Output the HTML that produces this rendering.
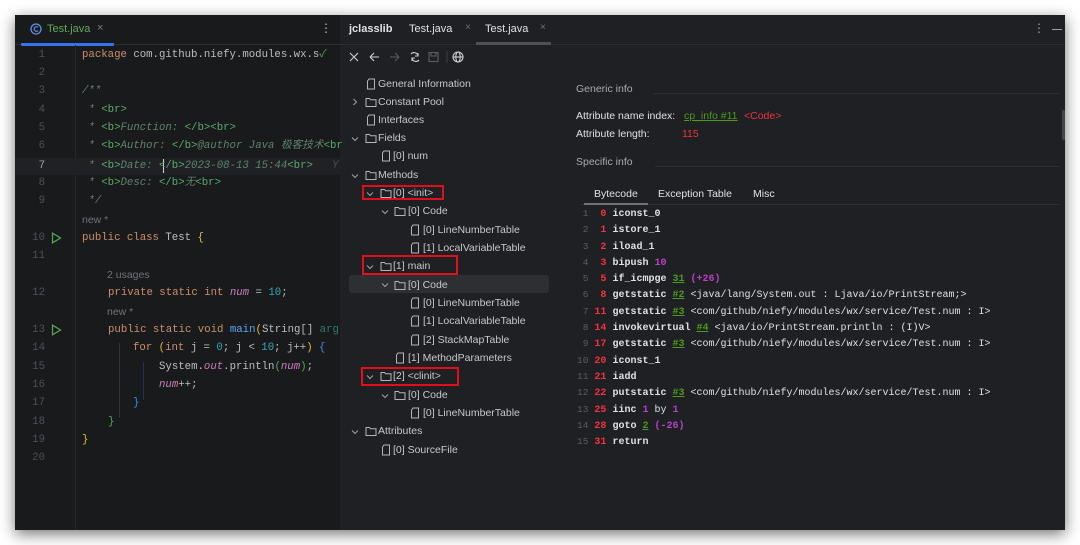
<!DOCTYPE html>
<html><head><meta charset="utf-8">
<style>
*{margin:0;padding:0;box-sizing:border-box}
body{width:1080px;height:545px;background:#fff;position:relative;overflow:hidden;font-family:"Liberation Sans","Noto Sans CJK SC",sans-serif}
.win{position:absolute;left:15px;top:15px;width:1050px;height:515px;background:#1f2023;box-shadow:0 4px 14px rgba(0,0,0,.55);overflow:hidden}
.ed{position:absolute;left:0;top:0;width:325px;height:515px;background:#191a1c}
.gline{position:absolute;left:60px;top:30px;width:1px;height:485px;background:#26272a}
.a{position:absolute;white-space:pre;line-height:14px}
.mono{font-family:"Liberation Mono","Noto Sans CJK SC",monospace;font-size:10.7px}
.ln{color:#4b5059;width:30px;text-align:right;font-family:"Liberation Mono",monospace;font-size:10.7px}
.kw{color:#cf8e6d}.cm{color:#5f826b;font-style:italic}.tg{color:#5aab6a;font-style:normal}
.pl{color:#bcbec4}.num{color:#2aacb8}.fld{color:#c77dbb;font-style:italic}.fn{color:#56a8f5}.yl{color:#e8ba36}.gr{color:#54a857}.bl{color:#3d8beb}
.hint{color:#6f737a;font-size:10.5px}
.tree{color:#c6c8cd;font-size:10.5px}
.bc{font-family:"Liberation Mono",monospace;font-size:10px;font-weight:bold;color:#dfe1e5}
.bn{color:#f2323f}.bp{color:#b740c8}.bg{color:#4c9c1a;text-decoration:underline}.br{font-weight:normal;color:#dfe1e5}
.rl{color:#5a5d63;font-family:"Liberation Mono",monospace;font-size:9.5px;font-weight:normal}
.box{position:absolute;border:2px solid #e0101a}
</style></head><body>
<div class="win">
<div class="ed">
 <div style="position:absolute;left:0;top:29px;width:325px;height:1px;background:#2b2d30"></div>
 <div style="position:absolute;left:6px;top:28px;width:93px;height:3px;background:#3574f0;border-radius:1px"></div>
 <svg class="a" style="left:15px;top:8px" width="12" height="12"><circle cx="6" cy="6" r="5" fill="none" stroke="#5e8ee8" stroke-width="1.3"/><path d="M8 4.3A2.3 2.3 0 1 0 8 7.7" fill="none" stroke="#5e8ee8" stroke-width="1.2"/></svg>
 <div class="a" style="left:32px;top:7px;color:#5fa85b;font-size:11px">Test.java</div>
 <div class="a" style="left:82px;top:6px;color:#7a7e85;font-size:11px">×</div>
 <div class="a" style="left:305px;top:6px;color:#bcbec4;font-size:12px">⋮</div>
 <div class="gline"></div>
 <div style="position:absolute;left:0;top:143px;width:325px;height:17px;background:#202124"></div>
 <div style="position:absolute;left:148px;top:144px;width:1px;height:14px;background:#ced0d6"></div>
 <div style="position:absolute;left:104px;top:328px;width:1px;height:75px;background:#2c3a2c"></div>
 <div style="position:absolute;left:128px;top:347px;width:1px;height:38px;background:#23344a"></div>

 <div class="a ln" style="left:0;top:33px">1</div><div class="a mono" style="left:67px;top:33px"><span class="kw">package</span><span class="pl"> com.github.niefy.modules.wx.s</span><span class="gr">✓</span></div>
 <div class="a ln" style="left:0;top:51px">2</div>
 <div class="a ln" style="left:0;top:69px">3</div><div class="a mono cm" style="left:67px;top:69px">/**</div>
 <div class="a ln" style="left:0;top:88px">4</div><div class="a mono cm" style="left:67px;top:88px"> * <span class="tg">&lt;br&gt;</span></div>
 <div class="a ln" style="left:0;top:106px">5</div><div class="a mono cm" style="left:67px;top:106px"> * <span class="tg">&lt;b&gt;</span>Function: <span class="tg">&lt;/b&gt;&lt;br&gt;</span></div>
 <div class="a ln" style="left:0;top:124px">6</div><div class="a mono cm" style="left:67px;top:124px"> * <span class="tg">&lt;b&gt;</span>Author: <span class="tg">&lt;/b&gt;</span>@author Java 极客技术<span class="tg">&lt;br</span></div>
 <div class="a ln" style="left:0;top:144px;color:#a1a3ab">7</div><div class="a mono cm" style="left:67px;top:144px"> * <span class="tg">&lt;b&gt;</span>Date: <span class="tg">&lt;/b&gt;</span>2023-08-13 15:44<span class="tg">&lt;br&gt;</span>   <span style="color:#4a4d52">Y</span></div>
 <div class="a ln" style="left:0;top:161px">8</div><div class="a mono cm" style="left:67px;top:161px"> * <span class="tg">&lt;b&gt;</span>Desc: <span class="tg">&lt;/b&gt;</span>无<span class="tg">&lt;br&gt;</span></div>
 <div class="a ln" style="left:0;top:179px">9</div><div class="a mono cm" style="left:67px;top:179px"> */</div>
 <div class="a hint" style="left:67px;top:198px">new *</div>
 <div class="a ln" style="left:0;top:216px">10</div><svg class="a" style="left:36px;top:217px" width="11" height="12"><path d="M1.5 1.2L9.5 6L1.5 10.8Z" fill="none" stroke="#56a857" stroke-width="1.2"/></svg>
 <div class="a mono" style="left:67px;top:216px"><span class="kw">public class</span><span class="pl"> Test </span><span class="yl">{</span></div>
 <div class="a ln" style="left:0;top:234px">11</div>
 <div class="a hint" style="left:92px;top:253px">2 usages</div>
 <div class="a ln" style="left:0;top:271px">12</div><div class="a mono" style="left:93px;top:271px"><span class="kw">private static int </span><span class="fld">num</span><span class="pl"> = </span><span class="num">10</span><span class="pl">;</span></div>
 <div class="a hint" style="left:92px;top:290px">new *</div>
 <div class="a ln" style="left:0;top:308px">13</div><svg class="a" style="left:36px;top:309px" width="11" height="12"><path d="M1.5 1.2L9.5 6L1.5 10.8Z" fill="none" stroke="#56a857" stroke-width="1.2"/></svg>
 <div class="a mono" style="left:93px;top:308px"><span class="kw">public static void </span><span class="fn">main</span><span class="yl">(</span><span class="pl">String[] </span><span style="color:#2f7a73">arg</span></div>
 <div class="a ln" style="left:0;top:326px">14</div><div class="a mono" style="left:118px;top:326px"><span class="kw">for </span><span class="yl">(</span><span class="kw">int </span><span class="pl">j = </span><span class="num">0</span><span class="pl">; j &lt; </span><span class="num">10</span><span class="pl">; j++</span><span class="yl">)</span><span class="bl"> {</span></div>
 <div class="a ln" style="left:0;top:345px">15</div><div class="a mono" style="left:144px;top:345px"><span class="pl">System.</span><span class="fld">out</span><span class="pl">.println</span><span class="gr">(</span><span class="fld">num</span><span class="gr">)</span><span class="pl">;</span></div>
 <div class="a ln" style="left:0;top:363px">16</div><div class="a mono" style="left:144px;top:363px"><span class="fld">num</span><span class="pl">++;</span></div>
 <div class="a ln" style="left:0;top:381px">17</div><div class="a mono bl" style="left:118px;top:381px">}</div>
 <div class="a ln" style="left:0;top:400px">18</div><div class="a mono gr" style="left:93px;top:400px">}</div>
 <div class="a ln" style="left:0;top:418px">19</div><div class="a mono yl" style="left:67px;top:418px">}</div>
 <div class="a ln" style="left:0;top:436px">20</div>
</div>

<div style="position:absolute;left:325px;top:29px;width:725px;height:1px;background:#2b2d30"></div>
<div class="a" style="left:334px;top:7px;color:#dfe1e5;font-size:11px;font-weight:bold">jclasslib</div>
<div class="a" style="left:394px;top:7px;color:#dfe1e5;font-size:11px">Test.java</div>
<div class="a" style="left:450px;top:6px;color:#6f737a;font-size:10px">×</div>
<div class="a" style="left:470px;top:7px;color:#dfe1e5;font-size:11px">Test.java</div>
<div class="a" style="left:525px;top:6px;color:#6f737a;font-size:10px">×</div>
<div style="position:absolute;left:461px;top:27px;width:75px;height:3px;background:#4e5157"></div>
<div class="a" style="left:1018px;top:6px;color:#9da0a8;font-size:12px">⋮</div>
<div style="position:absolute;left:1037px;top:14px;width:10px;height:1px;background:#9da0a8"></div>
<div style="position:absolute;left:1058px;top:0;width:1px;height:515px;background:#2b2d30"></div>
<div style="position:absolute;left:1047px;top:95px;width:3px;height:30px;background:#44464b;border-radius:2px"></div>

<svg class="a" style="left:333px;top:36px" width="130" height="14" fill="none" stroke-width="1.1">
 <path d="M2 2L10 10M10 2L2 10" stroke="#ced0d6"/>
 <path d="M22 6H31M22 6L26 2M22 6L26 10" stroke="#ced0d6"/>
 <path d="M42 6H51M51 6L47 2M51 6L47 10" stroke="#5a5d63"/>
 <path d="M63 3A4 4 0 0 1 70 5M71 9A4 4 0 0 1 64 7M70 2V5H67M64 10V7H67" stroke="#ced0d6"/>
 <rect x="81" y="1.5" width="9" height="9" stroke="#5a5d63"/><path d="M83 1.5V5H88V1.5" stroke="#5a5d63"/>
 <path d="M99 0V12" stroke="#3a3c40"/>
 <circle cx="110" cy="6" r="5" stroke="#ced0d6"/><ellipse cx="110" cy="6" rx="2.2" ry="5" stroke="#ced0d6"/><path d="M105 6H115" stroke="#ced0d6"/>
</svg>

<div style="position:absolute;left:334px;top:260px;width:200px;height:18px;background:#2d2f33;border-radius:3px"></div>

<svg width="0" height="0" style="position:absolute"><defs>
<symbol id="fo" viewBox="0 0 12 12"><path d="M1 2.5H4.5L5.5 3.8H11V10.5H1Z" fill="none" stroke="#b4b6bc" stroke-width="1"/></symbol>
<symbol id="fi" viewBox="0 0 12 12"><path d="M4 1H9.5V11H2.5V3Z" fill="none" stroke="#b4b6bc" stroke-width="1"/></symbol>
<symbol id="ch" viewBox="0 0 8 8"><path d="M1 2.5L4 5.5L7 2.5" fill="none" stroke="#9da0a8" stroke-width="1"/></symbol>
<symbol id="cr" viewBox="0 0 8 8"><path d="M2.5 1L5.5 4L2.5 7" fill="none" stroke="#9da0a8" stroke-width="1"/></symbol>
</defs></svg>

<div class="tree">
<svg class="a" style="left:350px;top:63px" width="12" height="12"><use href="#fi"/></svg><div class="a" style="left:363px;top:62px">General Information</div>
<svg class="a" style="left:336px;top:83px" width="8" height="8"><use href="#cr"/></svg><svg class="a" style="left:350px;top:81px" width="12" height="12"><use href="#fo"/></svg><div class="a" style="left:363px;top:80px">Constant Pool</div>
<svg class="a" style="left:350px;top:99px" width="12" height="12"><use href="#fi"/></svg><div class="a" style="left:363px;top:98px">Interfaces</div>
<svg class="a" style="left:336px;top:120px" width="8" height="8"><use href="#ch"/></svg><svg class="a" style="left:350px;top:117px" width="12" height="12"><use href="#fo"/></svg><div class="a" style="left:363px;top:116px">Fields</div>
<svg class="a" style="left:365px;top:135px" width="12" height="12"><use href="#fi"/></svg><div class="a" style="left:378px;top:134px">[0] num</div>
<svg class="a" style="left:336px;top:157px" width="8" height="8"><use href="#ch"/></svg><svg class="a" style="left:350px;top:154px" width="12" height="12"><use href="#fo"/></svg><div class="a" style="left:363px;top:153px">Methods</div>
<svg class="a" style="left:351px;top:175px" width="8" height="8"><use href="#ch"/></svg><svg class="a" style="left:365px;top:172px" width="12" height="12"><use href="#fo"/></svg><div class="a" style="left:378px;top:171px">[0] &lt;init&gt;</div>
<svg class="a" style="left:366px;top:193px" width="8" height="8"><use href="#ch"/></svg><svg class="a" style="left:379px;top:190px" width="12" height="12"><use href="#fo"/></svg><div class="a" style="left:393px;top:189px">[0] Code</div>
<svg class="a" style="left:394px;top:209px" width="12" height="12"><use href="#fi"/></svg><div class="a" style="left:408px;top:208px">[0] LineNumberTable</div>
<svg class="a" style="left:394px;top:227px" width="12" height="12"><use href="#fi"/></svg><div class="a" style="left:408px;top:226px">[1] LocalVariableTable</div>
<svg class="a" style="left:351px;top:248px" width="8" height="8"><use href="#ch"/></svg><svg class="a" style="left:365px;top:245px" width="12" height="12"><use href="#fo"/></svg><div class="a" style="left:378px;top:244px">[1] main</div>
<svg class="a" style="left:366px;top:266px" width="8" height="8"><use href="#ch"/></svg><svg class="a" style="left:379px;top:264px" width="12" height="12"><use href="#fo"/></svg><div class="a" style="left:393px;top:263px">[0] Code</div>
<svg class="a" style="left:394px;top:282px" width="12" height="12"><use href="#fi"/></svg><div class="a" style="left:408px;top:281px">[0] LineNumberTable</div>
<svg class="a" style="left:394px;top:300px" width="12" height="12"><use href="#fi"/></svg><div class="a" style="left:408px;top:299px">[1] LocalVariableTable</div>
<svg class="a" style="left:394px;top:319px" width="12" height="12"><use href="#fi"/></svg><div class="a" style="left:408px;top:318px">[2] StackMapTable</div>
<svg class="a" style="left:379px;top:337px" width="12" height="12"><use href="#fi"/></svg><div class="a" style="left:393px;top:336px">[1] MethodParameters</div>
<svg class="a" style="left:351px;top:358px" width="8" height="8"><use href="#ch"/></svg><svg class="a" style="left:365px;top:355px" width="12" height="12"><use href="#fo"/></svg><div class="a" style="left:378px;top:354px">[2] &lt;clinit&gt;</div>
<svg class="a" style="left:366px;top:377px" width="8" height="8"><use href="#ch"/></svg><svg class="a" style="left:379px;top:374px" width="12" height="12"><use href="#fo"/></svg><div class="a" style="left:393px;top:373px">[0] Code</div>
<svg class="a" style="left:394px;top:392px" width="12" height="12"><use href="#fi"/></svg><div class="a" style="left:408px;top:391px">[0] LineNumberTable</div>
<svg class="a" style="left:336px;top:413px" width="8" height="8"><use href="#ch"/></svg><svg class="a" style="left:350px;top:410px" width="12" height="12"><use href="#fo"/></svg><div class="a" style="left:363px;top:409px">Attributes</div>
<svg class="a" style="left:365px;top:429px" width="12" height="12"><use href="#fi"/></svg><div class="a" style="left:378px;top:428px">[0] SourceFile</div>
</div>
<div class="box" style="left:347px;top:170px;width:82px;height:15px"></div>
<div class="box" style="left:347px;top:240px;width:96px;height:20px"></div>
<div class="box" style="left:346px;top:352px;width:98px;height:19px"></div>

<div class="a" style="left:561px;top:67px;color:#a9abb1;font-size:10.5px">Generic info</div>
<div style="position:absolute;left:638px;top:78px;width:407px;height:1px;background:#2d2f33"></div>
<div class="a" style="left:561px;top:94px;color:#dfe1e5;font-size:10.5px">Attribute name index:</div>
<div class="a" style="left:669px;top:94px;color:#4c9c1a;font-size:10.5px;text-decoration:underline">cp_info #11</div>
<div class="a" style="left:729px;top:94px;color:#f2323f;font-size:10.5px">&lt;Code&gt;</div>
<div class="a" style="left:561px;top:112px;color:#dfe1e5;font-size:10.5px">Attribute length:</div>
<div class="a" style="left:667px;top:112px;color:#f2323f;font-size:10.5px">115</div>
<div class="a" style="left:561px;top:140px;color:#a9abb1;font-size:10.5px">Specific info</div>
<div style="position:absolute;left:640px;top:151px;width:405px;height:1px;background:#2d2f33"></div>

<div class="a" style="left:579px;top:172px;color:#dfe1e5;font-size:10.5px">Bytecode</div>
<div class="a" style="left:643px;top:172px;color:#dfe1e5;font-size:10.5px">Exception Table</div>
<div class="a" style="left:738px;top:172px;color:#dfe1e5;font-size:10.5px">Misc</div>
<div style="position:absolute;left:566px;top:189px;width:479px;height:1px;background:#2d2f33"></div>
<div style="position:absolute;left:569px;top:188px;width:64px;height:2px;background:#6f737a"></div>

<div class="bc">
<div class="a" style="left:562px;top:191px;line-height:15.3px"><span class="rl"> 1</span>  <span class="bn">0</span> iconst_0
<span class="rl"> 2</span>  <span class="bn">1</span> istore_1
<span class="rl"> 3</span>  <span class="bn">2</span> iload_1
<span class="rl"> 4</span>  <span class="bn">3</span> bipush <span class="bp">10</span>
<span class="rl"> 5</span>  <span class="bn">5</span> if_icmpge <span class="bg">31</span> <span class="bp">(+26)</span>
<span class="rl"> 6</span>  <span class="bn">8</span> getstatic <span class="bg">#2</span> <span class="br">&lt;java/lang/System.out : Ljava/io/PrintStream;&gt;</span>
<span class="rl"> 7</span> <span class="bn">11</span> getstatic <span class="bg">#3</span> <span class="br">&lt;com/github/niefy/modules/wx/service/Test.num : I&gt;</span>
<span class="rl"> 8</span> <span class="bn">14</span> invokevirtual <span class="bg">#4</span> <span class="br">&lt;java/io/PrintStream.println : (I)V&gt;</span>
<span class="rl"> 9</span> <span class="bn">17</span> getstatic <span class="bg">#3</span> <span class="br">&lt;com/github/niefy/modules/wx/service/Test.num : I&gt;</span>
<span class="rl">10</span> <span class="bn">20</span> iconst_1
<span class="rl">11</span> <span class="bn">21</span> iadd
<span class="rl">12</span> <span class="bn">22</span> putstatic <span class="bg">#3</span> <span class="br">&lt;com/github/niefy/modules/wx/service/Test.num : I&gt;</span>
<span class="rl">13</span> <span class="bn">25</span> iinc <span class="bp">1</span> <span class="br">by</span> <span class="bp">1</span>
<span class="rl">14</span> <span class="bn">28</span> goto <span class="bg">2</span> <span class="bp">(-26)</span>
<span class="rl">15</span> <span class="bn">31</span> return</div>
</div>
</div>
</body></html>
